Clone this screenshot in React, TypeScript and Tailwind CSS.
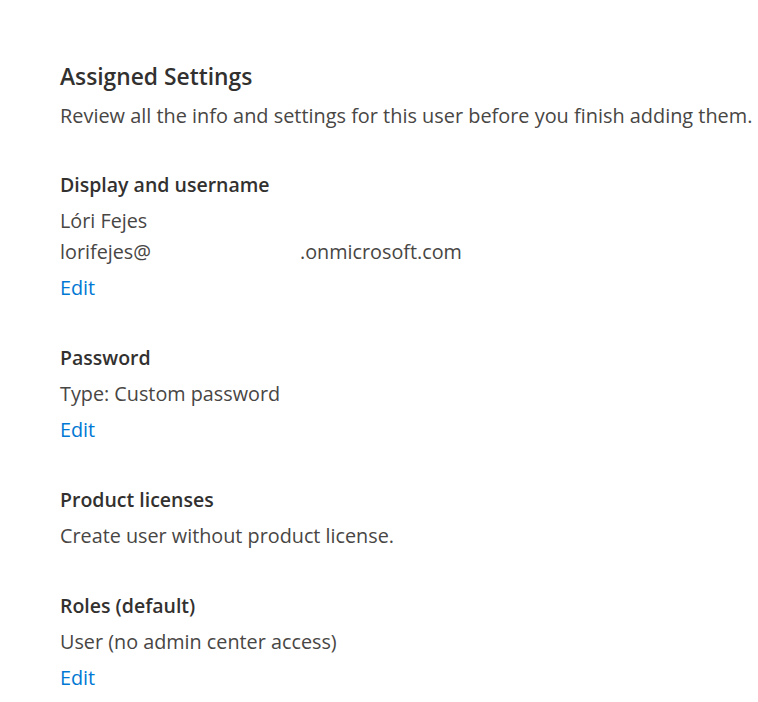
const font = { fontFamily: '"Open Sans", "Noto Sans", sans-serif' };

function Section({ title, children, edit = true }: { title: string; children: React.ReactNode; edit?: boolean }) {
  return (
    <div className={`flex flex-col ${edit ? '' : 'mb-[6px]'}`}>
      <div className="text-[19.5px] leading-[41px] font-semibold text-[#323130]">{title}</div>
      <div className="text-[19.8px] leading-[31px] text-[#484644]">{children}</div>
      {edit && (
        <a href="#" className="self-start text-[19.8px] leading-[42px] text-[#0078d4]">Edit</a>
      )}
    </div>
  );
}

export default function App() {
  return (
    <div className="min-h-screen bg-white pl-[60px] pt-[59px]" style={font}>
      <h2 className="text-[22.8px] leading-[36px] font-semibold text-[#323130]">Assigned Settings</h2>
      <p className="text-[19.9px] leading-[42px] text-[#484644]">
        Review all the info and settings for this user before you finish adding them.
      </p>
      <div className="mt-[27px] flex flex-col gap-[28px]">
        <Section title="Display and username">
          <div>Lóri Fejes</div>
          <div className="flex">
            <span className="w-[240px]">lorifejes@</span>
            <span>.onmicrosoft.com</span>
          </div>
        </Section>
        <Section title="Password">
          <div>Type: Custom password</div>
        </Section>
        <Section title="Product licenses" edit={false}>
          <div>Create user without product license.</div>
        </Section>
        <Section title="Roles (default)">
          <div>User (no admin center access)</div>
        </Section>
      </div>
    </div>
  );
}
